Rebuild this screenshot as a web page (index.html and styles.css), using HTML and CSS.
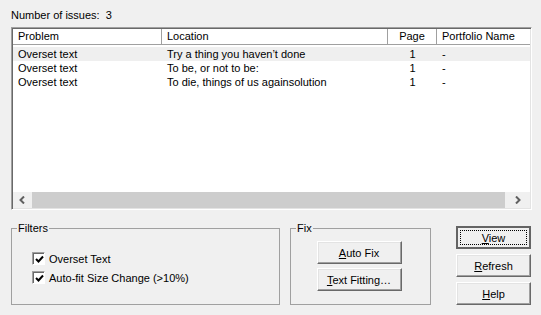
FILE: index.html
```html
<!DOCTYPE html>
<html lang="en">
<head>
    <meta charset="UTF-8">
    <title>Preflight</title>
    <link rel="stylesheet" href="styles.css">
</head>
<body>
    <div class="dialog">
        <div class="count">Number of issues:&nbsp; 3</div>

        <div class="list">
            <div class="list-head">
                <div class="col">Problem</div>
                <div class="col">Location</div>
                <div class="col center">Page</div>
                <div class="col">Portfolio Name</div>
            </div>
            <div class="list-body">
                <div class="row selected">
                    <div class="cell">Overset text</div>
                    <div class="cell">Try a thing you haven’t done</div>
                    <div class="cell center">1</div>
                    <div class="cell">-</div>
                </div>
                <div class="row">
                    <div class="cell">Overset text</div>
                    <div class="cell">To be, or not to be:</div>
                    <div class="cell center">1</div>
                    <div class="cell">-</div>
                </div>
                <div class="row">
                    <div class="cell">Overset text</div>
                    <div class="cell">To die, things of us againsolution</div>
                    <div class="cell center">1</div>
                    <div class="cell">-</div>
                </div>
            </div>
            <div class="hscroll">
                <span class="arrow">
                    <svg width="7" height="8" viewBox="0 0 7 8"><path d="M5 0.5 L1.5 4 L5 7.5" fill="none" stroke="#606060" stroke-width="2"/></svg>
                </span>
                <div class="thumb"></div>
                <span class="arrow">
                    <svg width="7" height="8" viewBox="0 0 7 8"><path d="M2 0.5 L5.5 4 L2 7.5" fill="none" stroke="#606060" stroke-width="2"/></svg>
                </span>
            </div>
        </div>

        <div class="bottom">
            <fieldset class="group filters">
                <legend>Filters</legend>
                <div class="checks">
                    <label class="check-row">
                        <span class="box"><svg width="9" height="9" viewBox="0 0 9 9"><path d="M1 4 L3.5 6.5 L8 1.5" fill="none" stroke="#000" stroke-width="2"/></svg></span>
                        Overset Text
                    </label>
                    <label class="check-row">
                        <span class="box"><svg width="9" height="9" viewBox="0 0 9 9"><path d="M1 4 L3.5 6.5 L8 1.5" fill="none" stroke="#000" stroke-width="2"/></svg></span>
                        Auto-fit Size Change (&gt;10%)
                    </label>
                </div>
            </fieldset>

            <fieldset class="group fix">
                <legend>Fix</legend>
                <button class="btn wide"><u>A</u>uto Fix</button>
                <button class="btn wide"><u>T</u>ext Fitting…</button>
            </fieldset>

            <div class="actions">
                <button class="btn default"><span class="focus"><u>V</u>iew</span></button>
                <button class="btn"><u>R</u>efresh</button>
                <button class="btn"><u>H</u>elp</button>
            </div>
        </div>
    </div>
</body>
</html>
```

FILE: styles.css
```css
body {
    margin: 0;
    background: #f0f0f0;
    font-family: 'Liberation Sans', Arial, sans-serif;
    font-size: 11px;
    color: #000;
}
.dialog {
    width: 541px;
    height: 315px;
    padding: 8px 9px 0 11px;
    box-sizing: border-box;
}
.count {
    height: 14px;
    line-height: 14px;
    margin-bottom: 5px;
}

/* list view */
.list {
    height: 183px;
    display: flex;
    flex-direction: column;
    background: #fff;
    border: 1px solid;
    border-color: #a0a0a0 #fff #fff #a0a0a0;
    box-shadow: inset 1px 1px #696969, inset -1px -1px #e3e3e3;
    padding: 1px;
    box-sizing: border-box;
}
.list-head, .row {
    display: grid;
    grid-template-columns: 149px 226px 49px 94px;
}
.list-head {
    height: 16px;
    line-height: 15px;
    border-bottom: 1px solid #a0a0a0;
    box-sizing: border-box;
}
.col {
    padding-left: 5px;
    border-right: 1px solid #a0a0a0;
    white-space: nowrap;
}
.col:last-child { border-right: none; }
.center { text-align: center; padding-left: 0; }
.list-body {
    flex: 1;
    padding-top: 2px;
}
.row {
    height: 14px;
    line-height: 14px;
}
.row.selected { background: #efefef; }
.cell {
    padding-left: 5px;
    white-space: nowrap;
}
.cell.center { padding-left: 0; }
.hscroll {
    height: 16px;
    display: flex;
    background: #f0f0f0;
}
.arrow {
    width: 19px;
    display: flex;
    align-items: center;
    justify-content: center;
}
.arrow:last-child { width: 25px; }
.thumb {
    flex: 1;
    background: #cdcdcd;
}

/* bottom area */
.bottom {
    display: flex;
    margin-top: 11px;
}
.group {
    margin: 0;
    padding: 0;
    height: 84px;
    border: 1px solid #a0a0a0;
    box-sizing: border-box;
    min-width: 0;
}
.group legend {
    margin-left: 5px;
    padding: 0 1px;
    line-height: 14px;
}
.filters { width: 269px; }
.checks { padding: 14px 0 0 20px; }
.check-row {
    display: flex;
    align-items: center;
    height: 19px;
}
.box {
    width: 13px;
    height: 13px;
    box-sizing: border-box;
    border: 1px solid;
    border-color: #a0a0a0 #fff #fff #a0a0a0;
    box-shadow: inset 1px 1px #696969;
    background: #fff;
    display: flex;
    align-items: center;
    justify-content: center;
    margin-right: 4px;
    padding: 1px 0 0 1px;
}
.fix {
    width: 141px;
    margin-left: 10px;
    padding-top: 6px;
    display: flex;
    flex-direction: column;
    align-items: center;
}
.actions {
    display: flex;
    flex-direction: column;
    gap: 5px;
    margin-left: 25px;
    padding-top: 5px;
}

/* buttons */
.btn {
    font-family: inherit;
    font-size: 11px;
    width: 75px;
    height: 23px;
    padding: 0;
    background: #f0f0f0;
    color: #000;
    border: 1px solid;
    border-color: #fff #696969 #696969 #fff;
    box-shadow: inset -1px -1px #a0a0a0, inset 1px 1px #e3e3e3;
    box-sizing: border-box;
}
.btn.wide {
    width: 85px;
    margin-left: -3px;
}
.btn.wide + .btn.wide { margin-top: 4px; }
.btn.default {
    border: 2px solid #646464;
    box-shadow: none;
    padding: 2px;
}
.focus {
    display: block;
    height: 100%;
    line-height: 14px;
    border: 1px dotted #000;
    box-sizing: border-box;
}
```
